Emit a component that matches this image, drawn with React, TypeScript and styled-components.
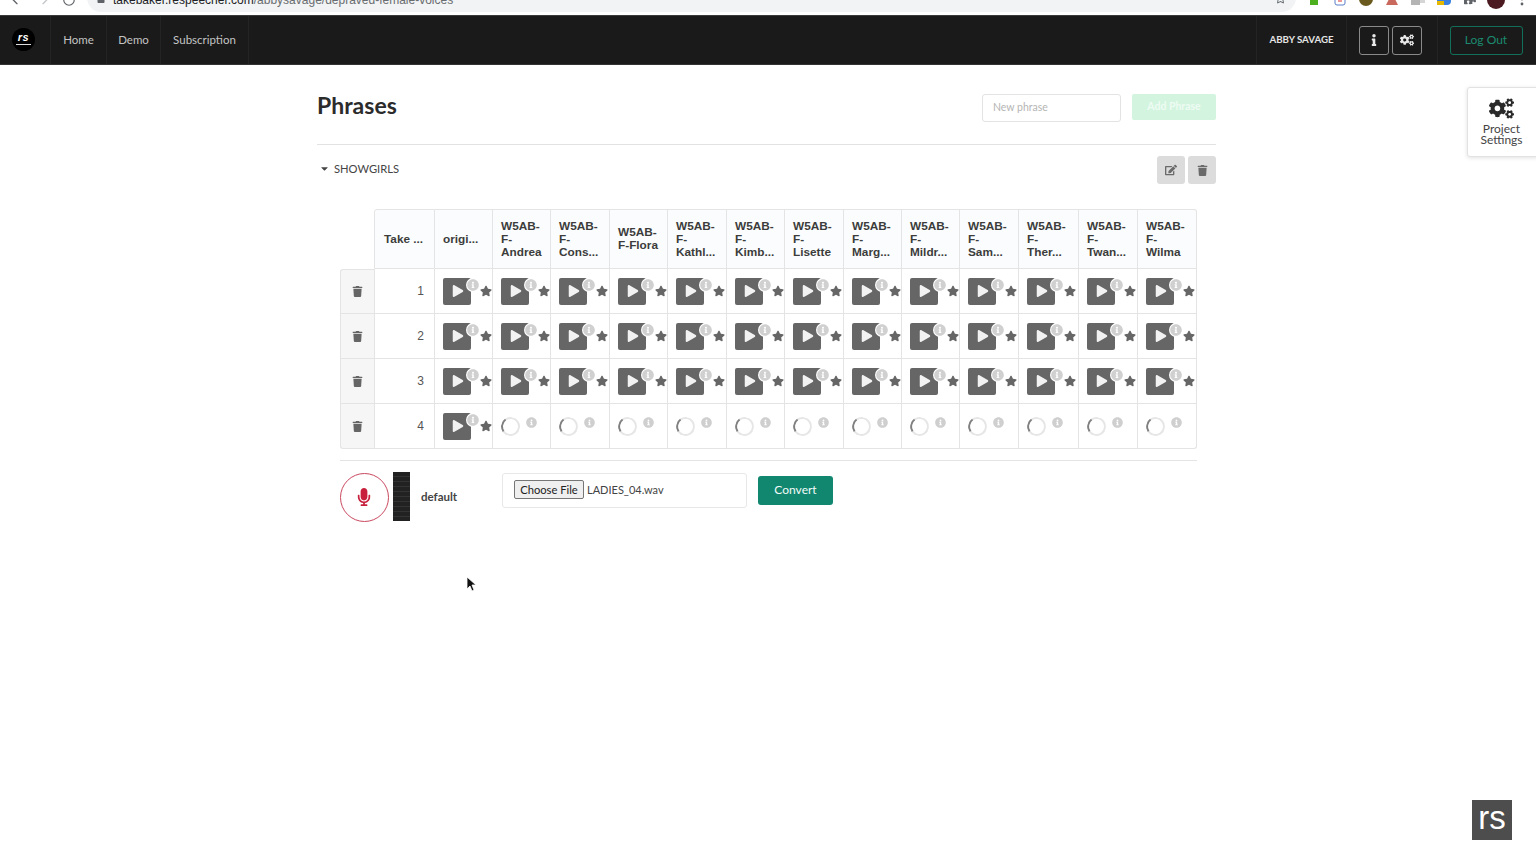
import React from "react";
import styled, { createGlobalStyle } from "styled-components";
import { ArrowLeft, ArrowRight, RotateCw } from "lucide-react";
import { FaCaretDown, FaCogs, FaEdit, FaInfo, FaInfoCircle, FaLock, FaMicrophone, FaPlay, FaPuzzlePiece, FaRegStar, FaStar, FaTrash } from "react-icons/fa";

const Global = createGlobalStyle`
  html, body { margin: 0; padding: 0; background: #fff; }
  body { font-family: Lato, "Liberation Sans", sans-serif; color: #333; overflow: hidden; }
  * { box-sizing: border-box; }
`;

const Page = styled.div`
  width: 1536px;
  height: 864px;
  position: relative;
  overflow: hidden;
  background: #fff;
`;

const Chrome = styled.div`
  height: 15px;
  display: flex;
  align-items: flex-end;
  overflow: hidden;
  background: #fff;
  padding-left: 4px;
`;
const ChromeIcon = styled.div<{ $w?: number; $c?: string; $pb?: number }>`
  width: ${(p) => p.$w ?? 26}px;
  flex: none;
  display: flex;
  justify-content: center;
  padding-bottom: ${(p) => p.$pb ?? 8}px;
  color: ${(p) => p.$c ?? "#5f6368"};
`;
const UrlPill = styled.div`
  width: 1209px;
  height: 30px;
  margin: 0 5px 3px 5px;
  flex: none;
  background: #f1f3f4;
  border-radius: 0 0 14px 14px;
  display: flex;
  align-items: flex-end;
  padding: 0 8px 5px 8px;
  font: 12px/14px "Liberation Sans", sans-serif;
  color: #6a6d70;
`;
const Lock = styled.span`
  width: 18px;
  color: #5f6368;
  display: flex;
  padding-left: 2px;
  padding-bottom: 4px;
`;
const Host = styled.span`
  color: #202124;
`;
const UrlRest = styled.span`
  flex: 1;
`;
const UrlStar = styled.span`
  color: #5f6368;
  display: flex;
  margin-right: 2px;
  padding-bottom: 3px;
`;
const Ext = styled.div`
  display: flex;
  align-items: flex-end;
`;

const Nav = styled.header`
  height: 50px;
  background: #1a1a1a;
  border-top: 1px solid #3a3a3a;
  border-bottom: 1px solid #333;
  display: flex;
  align-items: stretch;
  color: #cfcfcf;
`;
const NavCell = styled.div<{ $w: number }>`
  width: ${(p) => p.$w}px;
  flex: none;
  display: flex;
  align-items: center;
  justify-content: center;
  border-right: 1px solid #242424;
  padding-bottom: 1px;
  font-size: 11.5px;
  color: #c4c4c4;
`;
const LogoCell = styled(NavCell)`
  padding-right: 3px;
`;
const UserCell = styled(NavCell)`
  font-size: 9.7px;
  font-weight: 700;
  color: #e4e4e4;
  padding-bottom: 3px;
`;
const ButtonsCell = styled(NavCell)`
  gap: 3px;
  padding: 0 4px 0 0;
`;
const LogoutCell = styled(NavCell)`
  border-right: none;
  padding: 0 2px 0 0;
`;
const NavSpacer = styled.div`
  flex: 1;
  border-right: 1px solid #242424;
`;
const Logo = styled.div`
  width: 23px;
  height: 23px;
  border-radius: 50%;
  background: #000;
  color: #fff;
  font: italic 700 11px/19px "Liberation Sans", sans-serif;
  letter-spacing: 0.5px;
  text-align: center;
  display: flex;
  flex-direction: column;
  align-items: center;
  &::after {
    content: "";
    width: 15px;
    height: 1px;
    margin-top: -3px;
    background: #ddd;
  }
`;
const IconBtn = styled.div`
  width: 30px;
  height: 29px;
  border: 1px solid #8a8a8a;
  border-radius: 3px;
  display: flex;
  align-items: center;
  justify-content: center;
  color: #e8e8e8;
`;
const LogOut = styled.div`
  width: 73px;
  height: 29px;
  border: 1px solid #12705a;
  border-radius: 3px;
  color: #1b8a70;
  font-size: 12px;
  padding-bottom: 2px;
  display: flex;
  align-items: center;
  justify-content: center;
`;

const Main = styled.main`
  width: 899px;
  margin-left: 317px;
`;
const HeadRow = styled.div`
  height: 80px;
  border-bottom: 1px solid #e2e2e2;
  display: flex;
  align-items: flex-start;
  padding-top: 29px;
`;
const Title = styled.h1`
  margin: -1px 0 0;
  flex: 1;
  font-size: 23px;
  font-weight: 700;
  line-height: 24px;
  color: #2b2b2b;
`;
const PhraseInput = styled.div`
  width: 139px;
  height: 28px;
  border: 1px solid #e3e3e3;
  border-radius: 3px;
  padding-left: 10px;
  font-size: 10.5px;
  line-height: 24px;
  color: #b5b5b5;
`;
const AddPhrase = styled.div`
  width: 84px;
  height: 26px;
  margin-left: 11px;
  background: #d3f5df;
  border-radius: 2px;
  color: #eefbf3;
  font-size: 10.5px;
  font-weight: 700;
  line-height: 24px;
  text-align: center;
`;

const SectionRow = styled.div`
  height: 64px;
  display: flex;
  align-items: flex-start;
  padding-top: 11px;
`;
const SectionName = styled.div`
  flex: 1;
  display: flex;
  align-items: center;
  padding: 4px 0 0 2px;
  gap: 4px;
  font-size: 11.2px;
  line-height: 16px;
  color: #444;
  height: 21px;
`;
const GrayBtn = styled.div`
  width: 28px;
  height: 28px;
  margin-left: 3px;
  background: #dcdcdc;
  border-radius: 3px;
  color: #6a6a6a;
  display: flex;
  align-items: center;
  justify-content: center;
`;

const Body = styled.div`
  margin-left: 23px;
  width: 857px;
`;
const Table = styled.div`
  display: grid;
  grid-template-columns: 34px 61px 58px 58px 59px 58px 59px 58px 59px 58px 58px 59px 60px 59px 59px;
  grid-template-rows: 60px 45px 45px 45px 45px;
`;
const Blank = styled.div``;
const HeadCell = styled.div<{ $first?: boolean; $last?: boolean }>`
  background: #fbfcfd;
  border-top: 1px solid #e4e4e4;
  border-right: 1px solid #e4e4e4;
  border-bottom: 1px solid #e4e4e4;
  border-left: ${(p) => (p.$first ? "1px solid #e4e4e4" : "none")};
  border-top-right-radius: ${(p) => (p.$last ? "3px" : "0")};
  border-top-left-radius: ${(p) => (p.$first ? "3px" : "0")};
  padding: 0 2px 0 ${(p) => (p.$first ? 9 : 8)}px;
  display: flex;
  align-items: center;
  font: 700 11.8px/13px "Liberation Sans", sans-serif;
  color: #3c3c3c;
`;
const DelCell = styled.div<{ $bottom?: boolean }>`
  background: #f6f6f6;
  border-left: 1px solid #e4e4e4;
  border-bottom: 1px solid #e4e4e4;
  border-bottom-left-radius: ${(p) => (p.$bottom ? "3px" : "0")};
  display: flex;
  align-items: center;
  justify-content: center;
  color: #666;
`;
const DelCellFirst = styled(DelCell)`
  border-top: 1px solid #e4e4e4;
  border-top-left-radius: 3px;
`;
const NumCell = styled.div`
  border-left: 1px solid #e4e4e4;
  border-right: 1px solid #e4e4e4;
  border-bottom: 1px solid #e4e4e4;
  display: flex;
  align-items: center;
  justify-content: flex-end;
  padding-right: 10px;
  font: 12px "Liberation Sans", sans-serif;
  color: #555;
`;
const Cell = styled.div<{ $last?: boolean }>`
  border-right: 1px solid #e4e4e4;
  border-bottom: 1px solid #e4e4e4;
  border-bottom-right-radius: ${(p) => (p.$last ? "3px" : "0")};
  display: flex;
  align-items: center;
  padding-left: 8px;
`;
const Play = styled.div`
  position: relative;
  width: 28px;
  height: 27px;
  flex: none;
  background: #666;
  border-radius: 2px;
  color: #f2f2f2;
  display: flex;
  align-items: center;
  justify-content: center;
  padding-left: 1px;
`;
const InfoBadge = styled.div`
  position: absolute;
  top: 0;
  right: -9px;
  width: 14px;
  height: 14px;
  border-radius: 50%;
  background: #fff;
  color: #d0d0d0;
  display: flex;
  align-items: center;
  justify-content: center;
`;
const Star = styled.div`
  margin-left: 9px;
  color: #666;
  display: flex;
`;
const Pending = styled.div`
  display: flex;
  align-items: flex-start;
  gap: 6px;
  color: #cfcfcf;
`;
const Spinner = styled.div`
  width: 19px;
  height: 19px;
  border-radius: 50%;
  border: 2px solid #e6e6e6;
  border-left-color: #808080;
  transform: rotate(10deg);
`;

const Rule = styled.div`
  height: 1px;
  margin-top: 11px;
  background: #e4e4e4;
`;
const Recorder = styled.div`
  display: flex;
  align-items: flex-start;
  padding-top: 12px;
`;
const MicBtn = styled.div`
  width: 49px;
  height: 49px;
  border: 1px solid #c9495f;
  border-radius: 50%;
  color: #c8203c;
  padding: 0 1px 2px 0;
  display: flex;
  align-items: center;
  justify-content: center;
`;
const Meter = styled.div`
  width: 17px;
  height: 49px;
  margin: -1px 0 0 4px;
  background: repeating-linear-gradient(#222 0 4px, #333 4px 5px);
`;
const DeviceName = styled.div`
  width: 92px;
  padding: 16px 0 0 11px;
  font-size: 11.5px;
  font-weight: 700;
  line-height: 16px;
  color: #444;
`;
const FileBox = styled.div`
  width: 245px;
  height: 35px;
  border: 1px solid #e8e8e8;
  border-radius: 3px;
  display: flex;
  align-items: center;
  padding: 0 0 2px 11px;
  font-size: 11px;
  color: #444;
  gap: 3px;
`;
const ChooseFile = styled.button`
  width: 70px;
  height: 19px;
  padding: 0;
  background: #efefef;
  border: 1px solid #767676;
  border-radius: 2px;
  font: 11.2px Lato, sans-serif;
  color: #222;
`;
const Convert = styled.div`
  width: 75px;
  height: 29px;
  margin: 3px 0 0 11px;
  background: #12876f;
  border-radius: 3px;
  color: #f2fbf8;
  font-size: 12px;
  line-height: 28px;
  text-align: center;
`;

const SettingsCard = styled.div`
  position: absolute;
  left: 1467px;
  top: 87px;
  width: 72px;
  height: 70px;
  background: #fff;
  border: 1px solid #e2e2e2;
  border-radius: 3px;
  box-shadow: 0 1px 4px rgba(0, 0, 0, 0.12);
  display: flex;
  flex-direction: column;
  align-items: center;
  padding: 8px 3px 0 0;
  font-size: 12px;
  line-height: 11px;
  color: #444;
  text-align: center;
`;
const SettingsIcon = styled.div`
  height: 27px;
  color: #2a2a2a;
  display: flex;
`;
const Watermark = styled.div`
  position: absolute;
  left: 1472px;
  top: 800px;
  width: 40px;
  height: 40px;
  background: #4d4d4d;
  color: #fff;
  font: 33px/36px "Liberation Sans", sans-serif;
  text-align: center;
`;
const Cursor = styled.svg`
  position: absolute;
  left: 466px;
  top: 576px;
`;

const heads = [
  "origi...",
  "W5AB-\nF-\nAndrea",
  "W5AB-\nF-\nCons...",
  "W5AB-\nF-Flora",
  "W5AB-\nF-\nKathl...",
  "W5AB-\nF-\nKimb...",
  "W5AB-\nF-\nLisette",
  "W5AB-\nF-\nMarg...",
  "W5AB-\nF-\nMildr...",
  "W5AB-\nF-\nSam...",
  "W5AB-\nF-\nTher...",
  "W5AB-\nF-\nTwan...",
  "W5AB-\nF-\nWilma",
];

const HeadText = styled.span`
  white-space: pre-line;
`;

const Done = () => (
  <>
    <Play>
      <FaPlay size={12} />
      <InfoBadge>
        <FaInfoCircle size={12} />
      </InfoBadge>
    </Play>
    <Star>
      <FaStar size={12} />
    </Star>
  </>
);

const Busy = () => (
  <Pending>
    <Spinner />
    <FaInfoCircle size={11} />
  </Pending>
);

export default function App() {
  return (
    <Page>
      <Global />
      <Chrome>
        <ChromeIcon><ArrowLeft size={16} /></ChromeIcon>
        <ChromeIcon $c="#c4c7ca"><ArrowRight size={16} /></ChromeIcon>
        <ChromeIcon><RotateCw size={14} /></ChromeIcon>
        <UrlPill>
          <Lock><FaLock size={8} /></Lock>
          <Host>takebaker.respeecher.com</Host>
          <UrlRest>/abbysavage/depraved-female-voices</UrlRest>
          <UrlStar><FaRegStar size={11} /></UrlStar>
        </UrlPill>
        <Ext>
          <ChromeIcon $c="#4caf1e" $pb={10}><svg width="12" height="12" viewBox="0 0 12 12"><path d="M6 0l6 6h-2v6H2V6H0z" fill="currentColor" /></svg></ChromeIcon>
          <ChromeIcon $c="#5b7fc7" $pb={8}><svg width="12" height="14" viewBox="0 0 12 14"><rect x="1" y="1" width="10" height="11" rx="2" fill="none" stroke="currentColor" /><path d="M4 8h4" stroke="#d33" /></svg></ChromeIcon>
          <ChromeIcon $c="#6b5a1d" $pb={9}><svg width="14" height="14" viewBox="0 0 14 14"><circle cx="7" cy="7" r="7" fill="currentColor" /></svg></ChromeIcon>
          <ChromeIcon $c="#c9685d" $pb={10}><svg width="12" height="12" viewBox="0 0 12 12"><path d="M0 12L6 0l6 12z" fill="currentColor" /></svg></ChromeIcon>
          <ChromeIcon $c="#b4b4b4" $pb={10}><svg width="14" height="12" viewBox="0 0 14 12"><rect width="9" height="12" fill="currentColor" /><rect x="9" y="2" width="5" height="8" fill="#d5d5d5" /></svg></ChromeIcon>
          <ChromeIcon $c="#3b82e0" $pb={10}><svg width="14" height="12" viewBox="0 0 14 12"><rect width="14" height="12" rx="4" fill="currentColor" /><rect y="8" width="7" height="4" fill="#e6b800" /></svg></ChromeIcon>
          <ChromeIcon $c="#5f6368" $pb={10}><FaPuzzlePiece size={12} /></ChromeIcon>
          <ChromeIcon $c="#4a1a20" $pb={6}><svg width="18" height="18" viewBox="0 0 18 18"><circle cx="9" cy="9" r="9" fill="currentColor" /></svg></ChromeIcon>
          <ChromeIcon $c="#5f6368" $pb={9}><svg width="4" height="14" viewBox="0 0 4 14"><circle cx="2" cy="2" r="1.4" fill="currentColor" /><circle cx="2" cy="7" r="1.4" fill="currentColor" /><circle cx="2" cy="12" r="1.4" fill="currentColor" /></svg></ChromeIcon>
        </Ext>
      </Chrome>

      <Nav>
        <LogoCell $w={51}><Logo>rs</Logo></LogoCell>
        <NavCell $w={56}>Home</NavCell>
        <NavCell $w={54}>Demo</NavCell>
        <NavCell $w={88}>Subscription</NavCell>
        <NavSpacer />
        <UserCell $w={90}>ABBY SAVAGE</UserCell>
        <ButtonsCell $w={91}>
          <IconBtn><FaInfo size={12} /></IconBtn>
          <IconBtn><FaCogs size={14} /></IconBtn>
        </ButtonsCell>
        <LogoutCell $w={98}><LogOut>Log Out</LogOut></LogoutCell>
      </Nav>

      <Main>
        <HeadRow>
          <Title>Phrases</Title>
          <PhraseInput>New phrase</PhraseInput>
          <AddPhrase>Add Phrase</AddPhrase>
        </HeadRow>
        <SectionRow>
          <SectionName><FaCaretDown size={11} />SHOWGIRLS</SectionName>
          <GrayBtn><FaEdit size={12} /></GrayBtn>
          <GrayBtn><FaTrash size={11} /></GrayBtn>
        </SectionRow>

        <Body>
          <Table>
            <Blank />
            <HeadCell $first>Take ...</HeadCell>
            {heads.map((h, i) => (
              <HeadCell key={h} $last={i === heads.length - 1}>
                <HeadText>{h}</HeadText>
              </HeadCell>
            ))}
            {[1, 2, 3, 4].map((n) => (
              <React.Fragment key={n}>
                {n === 1 ? (
                  <DelCellFirst><FaTrash size={11} /></DelCellFirst>
                ) : (
                  <DelCell $bottom={n === 4}><FaTrash size={11} /></DelCell>
                )}
                <NumCell>{n}</NumCell>
                {heads.map((h, i) => (
                  <Cell key={h} $last={n === 4 && i === heads.length - 1}>
                    {n < 4 || i === 0 ? <Done /> : <Busy />}
                  </Cell>
                ))}
              </React.Fragment>
            ))}
          </Table>
          <Rule />
          <Recorder>
            <MicBtn><FaMicrophone size={18} /></MicBtn>
            <Meter />
            <DeviceName>default</DeviceName>
            <FileBox>
              <ChooseFile type="button">Choose File</ChooseFile>
              LADIES_04.wav
            </FileBox>
            <Convert>Convert</Convert>
          </Recorder>
        </Body>
      </Main>

      <SettingsCard>
        <SettingsIcon><FaCogs size={25} /></SettingsIcon>
        Project<br />Settings
      </SettingsCard>
      <Watermark>rs</Watermark>
      <Cursor width="10" height="16" viewBox="0 0 10 16">
        <path d="M1 1v12l3-3 2 5 2-1-2-5h4z" fill="#111" stroke="#fff" strokeWidth="0.8" />
      </Cursor>
    </Page>
  );
}
